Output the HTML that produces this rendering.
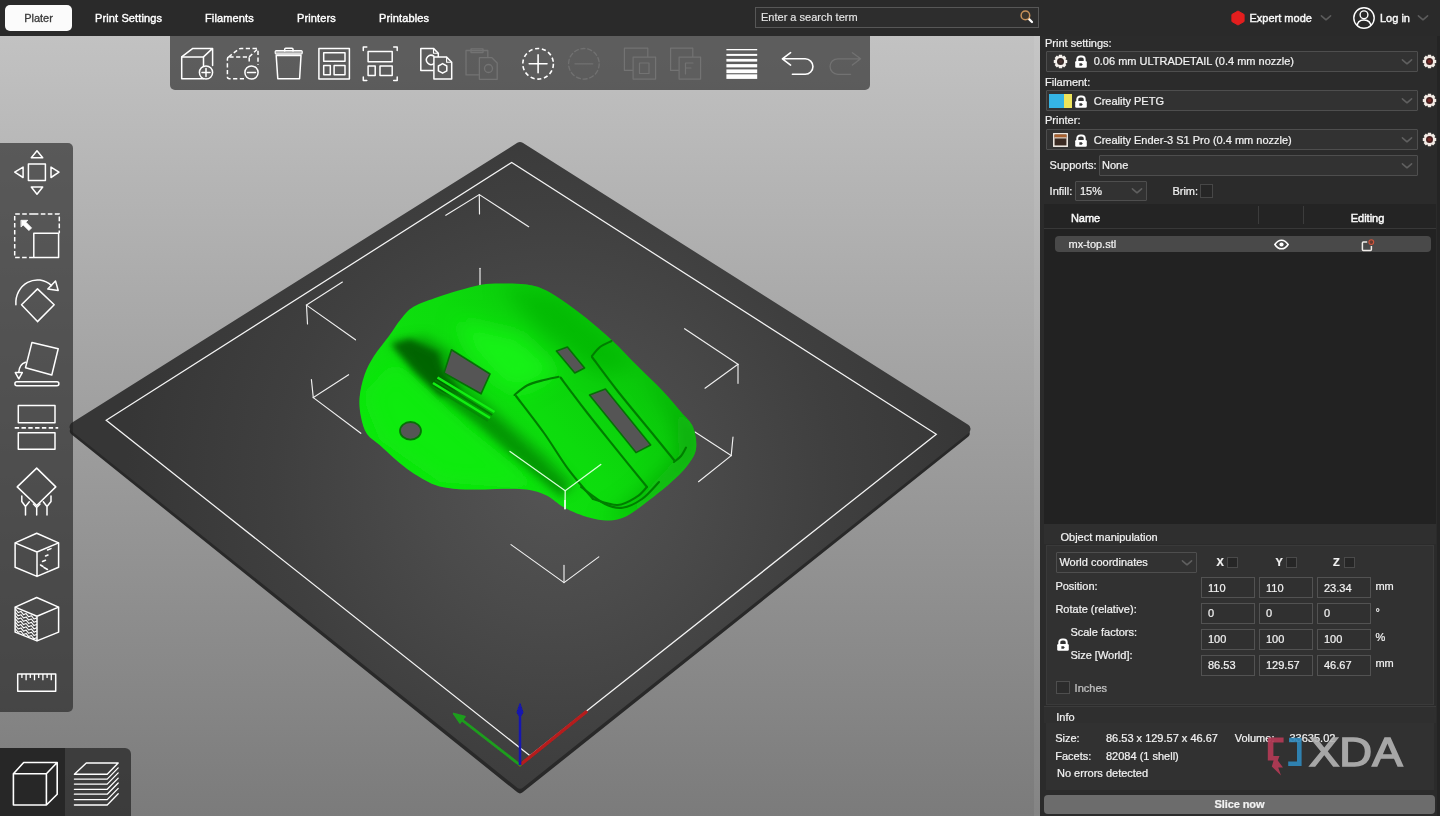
<!DOCTYPE html>
<html lang="en">
<head>
<meta charset="utf-8">
<title>PrusaSlicer</title>
<style>
*{box-sizing:border-box;margin:0;padding:0}
html,body{width:1440px;height:816px;overflow:hidden;background:#2b2b2b}
body{position:relative;font-family:"Liberation Sans",sans-serif;font-size:11px;color:#f0f0f0;-webkit-font-smoothing:antialiased;will-change:transform;transform:translateZ(0)}
.abs{position:absolute}
#topbar{position:absolute;left:0;top:0;width:1440px;height:36px;background:#2a2a2a}
.tab{position:absolute;top:5px;height:26px;line-height:26px;font-size:11px;color:#fff;text-align:center;white-space:nowrap;letter-spacing:0.12px;-webkit-text-stroke:0.4px #fff}
.tab.sel{background:#fbfbfb;color:#333;border-radius:5px;-webkit-text-stroke:0.3px #3a3a3a;color:#3a3a3a;letter-spacing:0}
#canvas{position:absolute;left:0;top:36px;width:1040px;height:780px;background:linear-gradient(#c2c2c2 0%,#7b7b7b 100%);overflow:hidden}
#scene{position:absolute;left:0;top:0;width:1040px;height:816px}
#tbar{position:absolute;left:170px;top:36px;width:700px;height:54px;background:rgba(30,30,30,.61);border-radius:0 0 5px 5px}
#lbar{position:absolute;left:0;top:143px;width:73px;height:569px;background:rgba(34,34,34,.63);border-radius:0 5px 5px 0}
#vbar{position:absolute;left:0;top:748px;width:131px;height:68px;background:rgba(30,30,30,.68);border-radius:0 6px 0 0}
#vbar .on{position:absolute;left:0;top:0;width:65px;height:68px;background:#272727}
#side{position:absolute;left:1040px;top:36px;width:400px;height:780px;background:#2b2b2b}
#sep{position:absolute;left:1033.5px;top:36px;width:6.5px;height:780px;background:rgba(255,255,255,.07)}
.lbl{position:absolute;white-space:nowrap;color:#f2f2f2;font-size:11px;line-height:13px;-webkit-text-stroke:0.22px #f2f2f2}
.combo{position:absolute;height:21px;background:#323232;border:1px solid #4e4e4e;border-radius:1px}
.combo .t{position:absolute;top:3px;font-size:11px;line-height:13px;white-space:nowrap;color:#f4f4f4}
.inp{position:absolute;width:54px;height:21px;background:#303030;border:1px solid #525252;font-size:11px;line-height:19px;padding-left:6px;color:#f4f4f4}
svg{position:absolute;overflow:visible}
</style>
</head>
<body>
<div id="canvas"></div>
<!--SCENE-->
<svg id="scene" width="1040" height="816" viewBox="0 0 1040 816" style="left:0;top:0;overflow:hidden">
<defs>
<radialGradient id="bedg" gradientUnits="userSpaceOnUse" cx="555" cy="480" r="430"><stop offset="0" stop-color="#545454"/><stop offset=".3" stop-color="#4b4b4b"/><stop offset=".65" stop-color="#3f3f3f"/><stop offset="1" stop-color="#363636"/></radialGradient>
<linearGradient id="mg" gradientUnits="userSpaceOnUse" x1="640" y1="300" x2="420" y2="500"><stop offset="0" stop-color="#0abe0a"/><stop offset=".5" stop-color="#0ddc0d"/><stop offset="1" stop-color="#0fe60f"/></linearGradient>
<filter id="b6" filterUnits="userSpaceOnUse" x="300" y="230" width="460" height="340"><feGaussianBlur stdDeviation="6"/></filter>
<filter id="b10" filterUnits="userSpaceOnUse" x="300" y="230" width="460" height="340"><feGaussianBlur stdDeviation="10"/></filter>
<filter id="b3" filterUnits="userSpaceOnUse" x="300" y="230" width="460" height="340"><feGaussianBlur stdDeviation="3"/></filter>
<filter id="b1" filterUnits="userSpaceOnUse" x="0" y="0" width="1040" height="816"><feGaussianBlur stdDeviation="0.6"/></filter>
<clipPath id="mclip"><path d="M481.0 284.7C488.1 283.5 492.8 283.6 500.0 283.5C507.2 283.4 517.5 283.4 524.5 284.2C531.5 285.0 535.6 285.9 541.7 288.4C547.8 290.9 553.6 294.5 561.0 299.4C568.4 304.3 577.2 310.9 585.8 317.8C594.4 324.7 604.2 333.0 612.7 341.0C621.2 349.0 628.8 357.4 637.0 365.6C645.2 373.8 654.5 382.3 661.8 390.0C669.1 397.7 675.8 405.8 681.0 412.0C686.2 418.2 690.5 420.8 693.0 427.0C695.5 433.2 697.0 442.5 696.0 449.0C695.0 455.5 691.3 460.3 687.0 466.0C682.7 471.7 676.9 477.1 670.0 483.3C663.1 489.5 652.8 497.5 645.4 503.0C638.0 508.5 631.9 513.5 625.8 516.4C619.7 519.3 614.7 520.4 608.6 520.6C602.5 520.8 596.4 519.7 589.0 517.6C581.6 515.5 571.5 511.5 564.5 507.8C557.5 504.1 553.0 498.7 546.7 495.6C540.5 492.6 534.4 490.6 527.0 489.5C519.6 488.4 510.7 488.7 502.5 488.7C494.3 488.7 486.2 489.5 478.0 489.5C469.8 489.5 460.9 489.5 453.5 488.7C446.1 487.9 440.8 487.3 433.9 484.6C427.0 481.9 418.4 476.6 411.9 472.3C405.4 468.0 400.0 463.3 394.7 458.8C389.4 454.3 384.6 449.4 380.0 445.3C375.4 441.2 370.2 438.7 367.0 434.0C363.8 429.3 362.2 423.1 361.0 417.0C359.8 410.9 359.0 404.5 359.6 397.5C360.2 390.5 362.1 381.9 364.5 375.0C366.9 368.1 369.9 362.5 374.0 356.0C378.1 349.5 384.5 342.2 389.0 336.0C393.5 329.8 396.9 323.9 401.0 319.0C405.1 314.1 407.3 310.5 413.5 306.8C419.7 303.1 430.6 299.7 438.0 297.0C445.4 294.3 450.4 292.9 457.6 290.8C464.8 288.8 473.9 285.9 481.0 284.7Z"/></clipPath>
</defs>
<path d="M74 431L520 150L965.5 433.5L520 789Z" fill="#292929" stroke="#292929" stroke-width="8.5" stroke-linejoin="round"/>
<path d="M74.5 427L520 147L965.5 429L520 783.5Z" fill="url(#bedg)" stroke="url(#bedg)" stroke-width="10" stroke-linejoin="round"/>
<path d="M106.2 420.3L511.7 162.5L936.3 434.2L530 755.8Z" fill="none" stroke="#f4f4f4" stroke-width="1.25" stroke-linejoin="miter"/>
<g fill="none" stroke="#f0f0f0" stroke-width="1.15" stroke-linecap="round" stroke-linejoin="miter">
<path d="M445.8 215.3L479.3 194.6L528.7 226.7"/>
<path d="M479.3 194.6L479.5 214.0"/>
<path d="M480.0 268.3L480.0 285.0"/>
<path d="M342.4 282.0L306.5 305.1L355.5 339.8"/>
<path d="M306.5 305.1L307.5 324.0"/>
<path d="M348.6 374.7L313.3 397.6L360.8 433.3"/>
<path d="M313.3 397.6L311.4 379.6"/>
<path d="M684.6 328.7L738.0 364.2L705.0 388.2"/>
<path d="M738.0 364.2L738.0 383.3"/>
<path d="M695.0 432.0L731.2 455.6L698.5 481.7"/>
<path d="M731.2 455.6L733.0 437.0"/>
<path d="M511.0 544.6L564.0 582.6L598.8 556.9"/>
<path d="M564.0 582.6L564.0 565.4"/>
</g>
<g><path d="M481.0 284.7C488.1 283.5 492.8 283.6 500.0 283.5C507.2 283.4 517.5 283.4 524.5 284.2C531.5 285.0 535.6 285.9 541.7 288.4C547.8 290.9 553.6 294.5 561.0 299.4C568.4 304.3 577.2 310.9 585.8 317.8C594.4 324.7 604.2 333.0 612.7 341.0C621.2 349.0 628.8 357.4 637.0 365.6C645.2 373.8 654.5 382.3 661.8 390.0C669.1 397.7 675.8 405.8 681.0 412.0C686.2 418.2 690.5 420.8 693.0 427.0C695.5 433.2 697.0 442.5 696.0 449.0C695.0 455.5 691.3 460.3 687.0 466.0C682.7 471.7 676.9 477.1 670.0 483.3C663.1 489.5 652.8 497.5 645.4 503.0C638.0 508.5 631.9 513.5 625.8 516.4C619.7 519.3 614.7 520.4 608.6 520.6C602.5 520.8 596.4 519.7 589.0 517.6C581.6 515.5 571.5 511.5 564.5 507.8C557.5 504.1 553.0 498.7 546.7 495.6C540.5 492.6 534.4 490.6 527.0 489.5C519.6 488.4 510.7 488.7 502.5 488.7C494.3 488.7 486.2 489.5 478.0 489.5C469.8 489.5 460.9 489.5 453.5 488.7C446.1 487.9 440.8 487.3 433.9 484.6C427.0 481.9 418.4 476.6 411.9 472.3C405.4 468.0 400.0 463.3 394.7 458.8C389.4 454.3 384.6 449.4 380.0 445.3C375.4 441.2 370.2 438.7 367.0 434.0C363.8 429.3 362.2 423.1 361.0 417.0C359.8 410.9 359.0 404.5 359.6 397.5C360.2 390.5 362.1 381.9 364.5 375.0C366.9 368.1 369.9 362.5 374.0 356.0C378.1 349.5 384.5 342.2 389.0 336.0C393.5 329.8 396.9 323.9 401.0 319.0C405.1 314.1 407.3 310.5 413.5 306.8C419.7 303.1 430.6 299.7 438.0 297.0C445.4 294.3 450.4 292.9 457.6 290.8C464.8 288.8 473.9 285.9 481.0 284.7Z" fill="url(#mg)"/>
<g clip-path="url(#mclip)">
<g filter="url(#b10)">
<path d="M500 285L560 295L640 365L600 375L540 330Z" fill="#09b409" opacity=".7"/>
<path d="M455 320L520 335L560 372L520 392L500 385L470 350Z" fill="#16f416" opacity=".9"/>
<path d="M362 395L395 360L470 430L545 490L440 482L380 440Z" fill="#12ec12" opacity=".9"/>
<path d="M640 362L700 430L698 462L640 512L600 524L640 495L680 455L675 420Z" fill="#08a408" opacity=".85"/>
</g>
<g filter="url(#b6)">
<path d="M392 342L425 336L452 352L455 378L500 415L545 455L575 486L560 494L512 455L477 424L440 394L415 371Z" fill="#057505" opacity=".55"/>
</g>
<g filter="url(#b3)">
<path d="M391 344L410 339L438 352L444 372L462 392L440 396L415 372Z" fill="#045a04" opacity=".85"/>
<path d="M440 396L462 392L500 425L540 462L565 486L563 499L512 454L477 423Z" fill="#068206" opacity=".42"/>
</g>
</g>
<ellipse cx="410.5" cy="430.8" rx="10.5" ry="8.8" fill="#555" stroke="#067006" stroke-width="1.8"/>
<path d="M451.5 349.7L490 374L481 393.8L444 373Z" fill="#555" stroke="#067006" stroke-width="1.6" stroke-linejoin="round"/>
<path d="M437.5 377.5L494.5 412M433 383L490 418" stroke="#12ee12" stroke-width="2.6" fill="none"/>
<path d="M435.2 380.3L492.2 415" stroke="#057a05" stroke-width="1.8" fill="none"/>
<path d="M431 386L488 421" stroke="#068a06" stroke-width="1.6" fill="none"/>
<path d="M556.4 351L567.4 347L584.6 368L574.8 373Z" fill="#555" stroke="#067006" stroke-width="1.6" stroke-linejoin="round"/>
<path d="M589.5 395L605.4 389L650.7 445L636 452.6Z" fill="#555" stroke="#067006" stroke-width="1.6" stroke-linejoin="round"/>
<g fill="none" stroke="#067e06" stroke-width="2.1" stroke-linecap="round" filter="url(#b1)">
<path d="M514.5 395.0C516.6 393.4 522.1 388.0 527.0 385.5C531.9 383.0 538.8 381.4 544.0 380.0C549.2 378.6 556.1 377.3 558.5 376.8"/>
<path d="M516.0 396.0C520.7 402.2 535.2 420.7 544.0 433.0C552.8 445.3 560.4 458.7 568.6 469.7C576.8 480.7 588.9 494.1 593.0 499.0"/>
<path d="M593.0 499.0C597.1 500.0 610.3 505.4 617.6 505.0C624.9 504.6 632.1 499.7 637.0 496.7C641.9 493.7 645.3 488.6 647.0 487.0"/>
<path d="M560.5 377.5C564.7 383.1 576.7 399.3 585.8 411.0C594.9 422.7 604.8 434.9 615.0 447.6C625.2 460.3 641.7 480.4 647.0 487.0"/>
<path d="M592.0 357.0C596.3 362.7 607.6 378.3 617.6 391.0C627.6 403.7 642.6 421.5 652.0 433.0C661.4 444.5 670.3 455.5 674.0 460.0"/>
<path d="M592.0 356.0C593.3 354.5 596.8 349.5 600.0 347.0C603.2 344.5 609.6 342.0 611.5 341.0"/>
<path d="M674.0 462.0C675.2 461.0 679.0 458.4 681.0 456.0C683.0 453.6 685.2 449.0 686.0 447.6"/>
<path d="M581.0 487.0C585.0 489.8 598.1 500.6 605.0 504.0C611.9 507.4 616.3 508.5 622.5 507.7C628.7 506.9 635.9 503.3 642.0 499.0C648.1 494.7 656.2 484.8 659.0 482.0"/>
</g>
</g>
<g fill="none" stroke="#d8ffd8" stroke-width="1.3" stroke-linecap="round">
<path d="M510.0 451.5L565.2 490.7L600.8 464.5"/>
<path d="M565.2 490.7L565.0 509.0"/>
</g>
<path d="M565 500L565 509" stroke="#fff" stroke-width="1.3"/>
<g filter="url(#b1)">
<path d="M520 765L586 712" stroke="#b61c1c" stroke-width="3.4" stroke-linecap="round"/>
<path d="M520 765L462 720" stroke="#1e9e1e" stroke-width="2.8" stroke-linecap="round"/>
<path d="M453.5 713.5L465 716.5L460 723Z" fill="#1e9e1e" stroke="#1e9e1e" stroke-width="1.5" stroke-linejoin="round"/>
<path d="M520 765L520 712" stroke="#1414b0" stroke-width="2.6" stroke-linecap="butt"/>
<path d="M520 703.5L523 712.5L520 717L517 712.5Z" fill="#1414b0" stroke="#1414b0" stroke-width="1" stroke-linejoin="round"/>
</g>
</svg>
<!--/SCENE-->
<div id="tbar"></div>
<div id="lbar"></div>
<div id="vbar"><div class="on"></div></div>
<!--ICONS-->
<svg width="1038" height="816" viewBox="0 0 1038 816" style="left:0;top:0" fill="none" stroke="#fff" stroke-width="1.5" stroke-linejoin="round" stroke-linecap="round">
<g>
<path d="M181.7 56.9H203.5V78.8H181.7Z"/>
<path d="M181.7 56.9L192.8 48.4H212.6L203.5 56.9M212.6 48.4V65.5"/>
<circle cx="206" cy="72.5" r="6.6" fill="#5e5e5e"/>
<path d="M202 72.5H210M206 68.5V76.5"/>
</g>
<g stroke-dasharray="4.2 2.5" stroke-linecap="butt">
<path d="M229.4 56.9H249.2V63M244 78.8H229.4Q227.4 78.8 227.4 76.8V58.9Q227.4 56.9 229.4 56.9"/>
<path d="M228.5 57L238.5 49.2Q239.6 48.4 241 48.4H256Q258 48.4 258 50.4V65"/>
<path d="M249.2 56.9L257 49.5"/>
</g>
<circle cx="251.5" cy="72.5" r="6.6" fill="#5e5e5e"/><path d="M247.5 72.5H255.5"/>
<rect x="275.2" y="50.6" width="27" height="3.5" rx="1" fill="rgba(255,255,255,.5)" stroke-width="1.2"/>
<path d="M284.7 51V49.2Q284.7 48.2 285.7 48.2H292Q293 48.2 293 49.2V51"/>
<path d="M276.2 55.6H301L299.6 78.8H277.8Z"/>
<path d="M318.9 48.4H349.4V79.1H318.9Z"/>
<path d="M323.7 52.7H345V61.3H323.7ZM323.7 65.4H330.3V74.7H323.7ZM334.1 65.4H345V74.7H334.1Z"/>
<path d="M363.3 50.4V46.9H366.8M393.7 46.9H397.2V50.4M397.2 76.9V80.4H393.7M366.8 80.4H363.3V76.9"/>
<path d="M368.1 51.6H392.2V61.8H368.1ZM368.1 66H375.2V75.4H368.1ZM380 66H392.2V75.4H380Z"/>
<path d="M433 70.4H420.8V48.4H433.5L438.3 53.2V57"/><path d="M433.5 48.6V53.2H438.1" stroke-width="1.1"/>
<path d="M433.8 56.2A4.6 4.6 0 1 0 433.8 63.6" />
<path d="M433.9 57.1H446.6L451.7 62.2V79.1H433.9Z" fill="#5e5e5e"/><path d="M446.6 57.3V62.2H451.5" stroke-width="1.1"/>
<path d="M442.6 63.6L446.8 66V70.8L442.6 73.2L438.4 70.8V66Z"/>
<g stroke="#737373" stroke-width="1.3">
<path d="M479 74.9H466V50.5H487.8V57"/><path d="M471 48.8H483V52.5H471Z"/>
<path d="M479.4 57.7H492L497.2 63V79.3H479.4Z"/><circle cx="488.5" cy="68.5" r="4"/>
</g>
<circle cx="538.1" cy="63.8" r="15.3" stroke-dasharray="4.2 2.66" stroke-linecap="butt" stroke-width="1.6"/>
<path d="M529.2 63.8H547M538.1 54.9V72.7" stroke-width="1.6"/>
<g stroke="#717171" stroke-width="1.3"><circle cx="583.9" cy="63.8" r="15.3" stroke-dasharray="4.2 2.66"/><path d="M575 63.8H592.8"/></g>
<g stroke="#737373" stroke-width="1.2">
<path d="M624.4 48.2H647.8V70.4H624.4Z"/><path d="M633.1 57.1H655.6V79.1H633.1Z" fill="#5e5e5e"/><path d="M639.5 63H649V73.5H639.5Z"/>
<path d="M670.6 48.2H692.8V70.4H670.6Z"/><path d="M679.1 57.1H700.6V79.1H679.1Z" fill="#5e5e5e"/><path d="M693 63H685.5V74M685.5 68H691"/>
</g>
<rect x="726.4" y="49.0" width="30.8" height="1.3" fill="#fff" stroke="none"/>
<rect x="726.4" y="53.9" width="30.8" height="2.0" fill="#fff" stroke="none"/>
<rect x="726.4" y="58.9" width="30.8" height="2.7" fill="#fff" stroke="none"/>
<rect x="726.4" y="64.1" width="30.8" height="3.3" fill="#fff" stroke="none"/>
<rect x="726.4" y="69.4" width="30.8" height="3.8" fill="#fff" stroke="none"/>
<rect x="726.4" y="74.3" width="30.8" height="4.6" fill="#fff" stroke="none"/>
<path d="M790.6 52.7L782.4 58.8L790.6 65.1M782.8 58.8H805.2A7.75 7.75 0 0 1 805.2 74.3H792.4" stroke-width="1.6"/>
<g stroke="#727272" stroke-width="1.3"><path d="M852.4 52.7L860.6 58.8L852.4 65.1M860.2 58.8H837.8A7.75 7.75 0 0 0 837.8 74.3H850.6"/></g>
<path d="M28.4 163.9H45.4V180.6H28.4Z"/>
<path d="M37 150.8L42.7 157.8H31.3ZM37 194.2L42.7 187H31.3ZM14.7 172.2L23.1 167.1V177.5ZM59 172.2L51 167.1V177.5Z"/>
<path d="M33.8 214.1H14.7V257.6H33.8M33.8 214.1H59.3V233.2" stroke-dasharray="4.6 2.4" stroke-linecap="butt"/>
<path d="M33.8 233.2H58.6V257.6H33.8Z"/>
<path d="M21.3 220.3H27.8L25.9 222.2L31.6 227.9L28.9 230.6L23.2 224.9L21.3 226.8Z" fill="#fff" stroke-width=".8"/>
<path d="M37.5 288.9L54.2 304.8L37.5 321.6L21.5 304.8Z"/>
<path d="M15.9 304.8A21.5 23 0 0 1 51.5 285.6"/>
<path d="M55.5 280.9L47.8 288.9L58.2 290.5Z"/>
<path d="M31.9 342.6L58.2 348.7L51.8 375L25.5 367.8Z"/>
<rect x="14.9" y="381.7" width="44" height="4.1" rx="2"/>
<path d="M25.5 362.2Q19.2 364.5 18.8 372"/><path d="M15.3 372.6H22.3L18.8 378.8Z"/>
<path d="M18.3 405.5H55V422.7H18.3ZM18.3 432.7H55V449.3H18.3Z"/>
<path d="M14.7 427.8H58.2" stroke-dasharray="4.4 2.4" stroke-linecap="butt" stroke-width="1.7"/>
<path d="M36.7 468.1L55.8 486.9L36.7 505.5L17.2 486.9Z"/>
<path d="M21.8 496V501.5L25.5 506.5V515M25.5 506.5L29.3 501.8M51 496V501.5L47 506.5V515M47 506.5L43.3 501.8M36.7 515V507.5L33.4 504M36.7 507.5L40 504"/>
<path d="M36.7 533.3L58.6 542.9V567.3L37 576.4L15.1 567.3V542.9ZM15.1 542.9L37 552L58.6 542.9M37 552V576.4"/>
<path d="M47.5 550L51 548.6M45.5 556L48 555M42.5 561.5L45.5 560.2M40.5 565L43 566.5M44 567.5L47.5 569.5" stroke-width="1.5"/>
<path d="M36.7 597.5L58.6 607.1V632.1L37 640.9L15.1 632.1V607.1ZM15.1 607.1L37 616.2L58.6 607.1M37 616.2V640.9"/>
<path d="M15.6 609.2L18.2 612.5L20.9 611.4L23.5 614.7L26.1 613.6L28.7 616.8L31.4 615.7L34.0 619.0L36.6 617.9M15.6 612.5L18.2 615.8L20.9 614.7L23.5 618.0L26.1 616.9L28.7 620.1L31.4 619.0L34.0 622.3L36.6 621.2M15.6 615.8L18.2 619.1L20.9 618.0L23.5 621.3L26.1 620.2L28.7 623.4L31.4 622.3L34.0 625.6L36.6 624.5M15.6 619.1L18.2 622.4L20.9 621.3L23.5 624.6L26.1 623.5L28.7 626.7L31.4 625.6L34.0 628.9L36.6 627.8M15.6 622.4L18.2 625.7L20.9 624.6L23.5 627.9L26.1 626.8L28.7 630.0L31.4 628.9L34.0 632.2L36.6 631.1M15.6 625.7L18.2 629.0L20.9 627.9L23.5 631.2L26.1 630.1L28.7 633.3L31.4 632.2L34.0 635.5L36.6 634.4M15.6 629.0L18.2 632.3L20.9 631.2L23.5 634.5L26.1 633.4L28.7 636.6L31.4 635.5L34.0 638.8L36.6 637.7" stroke-width="1.1"/>
<path d="M17.7 674.1H55.7V691.3H17.7Z"/>
<path d="M21.9 674.1V678.1M26.1 674.1V680.3M30.3 674.1V678.1M34.5 674.1V680.3M38.7 674.1V678.1M42.9 674.1V680.3M47.1 674.1V678.1M51.3 674.1V680.3" stroke-width="1.3" stroke-linecap="butt"/>
<path d="M13.4 773.7H46.4V805H13.4ZM13.4 773.7L23.7 762.5H57.2L46.4 773.7M57.2 762.5V794.2L46.4 805" stroke-width="1.6"/>
<path d="M74.4 774.2L86.3 763H118.2L107.2 774.2Z" stroke-width="1.4"/>
<path d="M74.4 779.1H107.2L118.2 767.9M74.4 784.1H107.2L118.2 772.9M74.4 789.3H107.2L118.2 778.1M74.4 794.2H107.2L118.2 783.0M74.4 799.6H107.2L118.2 788.4M74.4 805.0H107.2L118.2 793.8" stroke-width="1.3"/>
</svg>
<!--/ICONS-->
<div id="topbar">
<div class="tab sel" style="left:5px;width:67px">Plater</div>
<div class="tab" style="left:95px">Print Settings</div>
<div class="tab" style="left:205px">Filaments</div>
<div class="tab" style="left:297px">Printers</div>
<div class="tab" style="left:379px">Printables</div>
</div>
<div id="sep"></div>
<div id="side"></div>
<!--SIDE-->
<div class="abs" style="left:755px;top:7px;width:283.5px;height:20.5px;border:1px solid #575757;background:#2d2d2d"></div>
<div class="lbl" style="left:761.0px;top:11.2px;color:#e6e6e6;-webkit-text-stroke:0.15px #e6e6e6">Enter a search term</div>
<svg width="14" height="14" viewBox="0 0 14 14" style="left:1019px;top:9px"><path d="M9.6 9.6L13 13" stroke="#fff" stroke-width="2.2" stroke-linecap="round"/><circle cx="6.4" cy="6.4" r="4.3" fill="#3a342c" stroke="#c8925a" stroke-width="1.5"/></svg>
<svg width="16" height="16" viewBox="-8 -8 16 16" style="left:1229.5px;top:10px"><path d="M0 -7L6.1 -3.5L6.1 3.5L0 7L-6.1 3.5L-6.1 -3.5Z" fill="#e31e1e" stroke="#e31e1e" stroke-width="1" stroke-linejoin="round"/></svg>
<div class="lbl" style="left:1249.5px;top:12.3px;-webkit-text-stroke:0.4px #fff">Expert mode</div>
<svg width="12" height="8" viewBox="0 0 12 8" style="left:1320.2px;top:14.0px"><path d="M1.4 1.8L6 5.8L10.6 1.8" fill="none" stroke="#5c5c5c" stroke-width="1.55" stroke-linecap="round" stroke-linejoin="round"/></svg>
<svg width="24" height="24" viewBox="-12 -12 24 24" style="left:1351.8px;top:6px"><defs><clipPath id="uc"><circle r="10"/></clipPath></defs><circle r="10.2" fill="none" stroke="#fff" stroke-width="1.4"/><circle cy="-3.2" r="3.9" fill="none" stroke="#fff" stroke-width="1.4"/><path d="M-7 9.5C-7 3.5 -3.5 2 0 2S7 3.5 7 9.5" fill="none" stroke="#fff" stroke-width="1.4" clip-path="url(#uc)"/></svg>
<div class="lbl" style="left:1380.0px;top:12.3px;-webkit-text-stroke:0.4px #fff">Log in</div>
<svg width="12" height="8" viewBox="0 0 12 8" style="left:1417.3px;top:14.0px"><path d="M1.4 1.8L6 5.8L10.6 1.8" fill="none" stroke="#5c5c5c" stroke-width="1.55" stroke-linecap="round" stroke-linejoin="round"/></svg>
<div class="abs" style="left:1044px;top:204px;width:392px;height:320px;background:#222"></div>
<div class="abs" style="left:1044px;top:204px;width:392px;height:25px;background:#242424;border-bottom:1px solid #383838"></div>
<div class="abs" style="left:1258px;top:206px;width:1px;height:18px;background:#3c3c3c"></div>
<div class="abs" style="left:1303px;top:206px;width:1px;height:18px;background:#3c3c3c"></div>
<div class="lbl" style="left:1045.0px;top:36.5px;">Print settings:</div>
<div class="combo" style="left:1046.0px;top:51.0px;width:371.5px;height:20.5px"></div>
<svg width="15" height="15" viewBox="-7.5 -7.5 15 15" style="left:1052.8px;top:54.2px"><path d="M6.71 -1.61L6.71 1.61L5.30 1.81L5.03 2.46L5.88 3.61L3.61 5.88L2.46 5.03L1.81 5.30L1.61 6.71L-1.61 6.71L-1.81 5.30L-2.46 5.03L-3.61 5.88L-5.88 3.61L-5.03 2.46L-5.30 1.81L-6.71 1.61L-6.71 -1.61L-5.30 -1.81L-5.03 -2.46L-5.88 -3.61L-3.61 -5.88L-2.46 -5.03L-1.81 -5.30L-1.61 -6.71L1.61 -6.71L1.81 -5.30L2.46 -5.03L3.61 -5.88L5.88 -3.61L5.03 -2.46L5.30 -1.81Z" fill="#f6f2ee"/><circle r="3.5" fill="#382c2a"/><circle r="1.8" fill="#4a3634"/></svg>
<svg width="12" height="13" viewBox="0 0 12 13" style="left:1075.0px;top:55.3px"><path d="M2.3 6.5V4.3a2.9 2.9 0 0 1 2.9-2.9h1.6a2.9 2.9 0 0 1 2.9 2.9V6.5" fill="none" stroke="#fff" stroke-width="2"/><rect x="0.2" y="5.9" width="11.6" height="6.9" rx="1.3" fill="#fff"/><path d="M4.4 8.3h2.2l1.2 1.2l-1.2 1.2H4.4Z" fill="#333"/></svg>
<div class="lbl" style="left:1093.7px;top:55.4px;">0.06 mm ULTRADETAIL (0.4 mm nozzle)</div>
<svg width="12" height="8" viewBox="0 0 12 8" style="left:1401.4px;top:58.0px"><path d="M1.4 1.8L6 5.8L10.6 1.8" fill="none" stroke="#606060" stroke-width="1.55" stroke-linecap="round" stroke-linejoin="round"/></svg>
<svg width="15" height="15" viewBox="-7.5 -7.5 15 15" style="left:1422.1px;top:54.2px"><path d="M6.71 -1.61L6.71 1.61L5.30 1.81L5.03 2.46L5.88 3.61L3.61 5.88L2.46 5.03L1.81 5.30L1.61 6.71L-1.61 6.71L-1.81 5.30L-2.46 5.03L-3.61 5.88L-5.88 3.61L-5.03 2.46L-5.30 1.81L-6.71 1.61L-6.71 -1.61L-5.30 -1.81L-5.03 -2.46L-5.88 -3.61L-3.61 -5.88L-2.46 -5.03L-1.81 -5.30L-1.61 -6.71L1.61 -6.71L1.81 -5.30L2.46 -5.03L3.61 -5.88L5.88 -3.61L5.03 -2.46L5.30 -1.81Z" fill="#f3ece6"/><circle r="3.5" fill="#4a2322"/><circle r="1.8" fill="#7a2b28"/></svg>
<div class="lbl" style="left:1045.0px;top:75.6px;">Filament:</div>
<div class="combo" style="left:1046.0px;top:90.2px;width:371.5px;height:20.5px"></div>
<div class="abs" style="left:1048.5px;top:93.5px;width:23px;height:14.5px;background:#35b4e4"></div><div class="abs" style="left:1063.5px;top:93.5px;width:8px;height:14.5px;background:#eee45a"></div>
<svg width="12" height="13" viewBox="0 0 12 13" style="left:1075.0px;top:94.5px"><path d="M2.3 6.5V4.3a2.9 2.9 0 0 1 2.9-2.9h1.6a2.9 2.9 0 0 1 2.9 2.9V6.5" fill="none" stroke="#fff" stroke-width="2"/><rect x="0.2" y="5.9" width="11.6" height="6.9" rx="1.3" fill="#fff"/><path d="M4.4 8.3h2.2l1.2 1.2l-1.2 1.2H4.4Z" fill="#333"/></svg>
<div class="lbl" style="left:1093.7px;top:94.7px;">Creality PETG</div>
<svg width="12" height="8" viewBox="0 0 12 8" style="left:1401.4px;top:97.2px"><path d="M1.4 1.8L6 5.8L10.6 1.8" fill="none" stroke="#606060" stroke-width="1.55" stroke-linecap="round" stroke-linejoin="round"/></svg>
<svg width="15" height="15" viewBox="-7.5 -7.5 15 15" style="left:1422.1px;top:93.3px"><path d="M6.71 -1.61L6.71 1.61L5.30 1.81L5.03 2.46L5.88 3.61L3.61 5.88L2.46 5.03L1.81 5.30L1.61 6.71L-1.61 6.71L-1.81 5.30L-2.46 5.03L-3.61 5.88L-5.88 3.61L-5.03 2.46L-5.30 1.81L-6.71 1.61L-6.71 -1.61L-5.30 -1.81L-5.03 -2.46L-5.88 -3.61L-3.61 -5.88L-2.46 -5.03L-1.81 -5.30L-1.61 -6.71L1.61 -6.71L1.81 -5.30L2.46 -5.03L3.61 -5.88L5.88 -3.61L5.03 -2.46L5.30 -1.81Z" fill="#f3ece6"/><circle r="3.5" fill="#4a2322"/><circle r="1.8" fill="#7a2b28"/></svg>
<div class="lbl" style="left:1045.0px;top:114.4px;">Printer:</div>
<div class="combo" style="left:1046.0px;top:129.3px;width:371.5px;height:20.5px"></div>
<svg width="15" height="14" viewBox="0 0 15 14" style="left:1053px;top:132.7px"><rect x=".8" y=".8" width="13.4" height="12.4" fill="#3a2a22" stroke="#f4efe8" stroke-width="1.5"/><rect x="1.5" y="1.5" width="12" height="3.2" fill="#a8602e"/><rect x="1.5" y="4.4" width="12" height="1" fill="#f4efe8"/></svg>
<svg width="12" height="13" viewBox="0 0 12 13" style="left:1075.0px;top:133.5px"><path d="M2.3 6.5V4.3a2.9 2.9 0 0 1 2.9-2.9h1.6a2.9 2.9 0 0 1 2.9 2.9V6.5" fill="none" stroke="#fff" stroke-width="2"/><rect x="0.2" y="5.9" width="11.6" height="6.9" rx="1.3" fill="#fff"/><path d="M4.4 8.3h2.2l1.2 1.2l-1.2 1.2H4.4Z" fill="#333"/></svg>
<div class="lbl" style="left:1093.7px;top:134.1px;">Creality Ender-3 S1 Pro (0.4 mm nozzle)</div>
<svg width="12" height="8" viewBox="0 0 12 8" style="left:1401.4px;top:136.2px"><path d="M1.4 1.8L6 5.8L10.6 1.8" fill="none" stroke="#606060" stroke-width="1.55" stroke-linecap="round" stroke-linejoin="round"/></svg>
<svg width="15" height="15" viewBox="-7.5 -7.5 15 15" style="left:1422.1px;top:132.3px"><path d="M6.71 -1.61L6.71 1.61L5.30 1.81L5.03 2.46L5.88 3.61L3.61 5.88L2.46 5.03L1.81 5.30L1.61 6.71L-1.61 6.71L-1.81 5.30L-2.46 5.03L-3.61 5.88L-5.88 3.61L-5.03 2.46L-5.30 1.81L-6.71 1.61L-6.71 -1.61L-5.30 -1.81L-5.03 -2.46L-5.88 -3.61L-3.61 -5.88L-2.46 -5.03L-1.81 -5.30L-1.61 -6.71L1.61 -6.71L1.81 -5.30L2.46 -5.03L3.61 -5.88L5.88 -3.61L5.03 -2.46L5.30 -1.81Z" fill="#f3ece6"/><circle r="3.5" fill="#4a2322"/><circle r="1.8" fill="#7a2b28"/></svg>
<div class="lbl" style="left:1049.6px;top:159.3px;">Supports:</div>
<div class="combo" style="left:1098.5px;top:155.0px;width:319.0px;height:20.5px"></div>
<div class="lbl" style="left:1102.0px;top:159.3px;">None</div>
<svg width="12" height="8" viewBox="0 0 12 8" style="left:1401.4px;top:161.5px"><path d="M1.4 1.8L6 5.8L10.6 1.8" fill="none" stroke="#606060" stroke-width="1.55" stroke-linecap="round" stroke-linejoin="round"/></svg>
<div class="lbl" style="left:1049.6px;top:184.7px;">Infill:</div>
<div class="combo" style="left:1074.6px;top:180.8px;width:72.0px;height:20.5px"></div>
<div class="lbl" style="left:1080.0px;top:184.5px;">15%</div>
<svg width="12" height="8" viewBox="0 0 12 8" style="left:1131.4px;top:187.3px"><path d="M1.4 1.8L6 5.8L10.6 1.8" fill="none" stroke="#606060" stroke-width="1.55" stroke-linecap="round" stroke-linejoin="round"/></svg>
<div class="lbl" style="left:1172.4px;top:184.7px;">Brim:</div>
<div class="abs" style="left:1199.6px;top:184.4px;width:13.5px;height:13.5px;background:#262626;border:1px solid #474747"></div>
<div class="lbl" style="left:1070.9px;top:211.9px;-webkit-text-stroke:0.45px #fff">Name</div>
<div class="lbl" style="left:1350.7px;top:211.9px;-webkit-text-stroke:0.45px #fff">Editing</div>
<div class="abs" style="left:1054.5px;top:236px;width:376.5px;height:16.3px;background:#494949;border-radius:4px"></div>
<div class="lbl" style="left:1068.5px;top:238.0px;">mx-top.stl</div>
<svg width="15" height="11" viewBox="-7.5 -5.5 15 11" style="left:1273.5px;top:239.2px"><path d="M-6.6 0C-4.6 -3.2 -2.4 -4.3 0 -4.3S4.6 -3.2 6.6 0C4.6 3.2 2.4 4.3 0 4.3S-4.6 3.2 -6.6 0Z" fill="none" stroke="#fff" stroke-width="1.6"/><circle r="2.1" fill="#fff"/></svg>
<svg width="14" height="13" viewBox="0 0 14 13" style="left:1361px;top:239px"><path d="M6.2 3H2.4a1 1 0 0 0-1 1v6.6a1 1 0 0 0 1 1h7a1 1 0 0 0 1-1V7" fill="none" stroke="#f0ece8" stroke-width="1.5"/><circle cx="10.3" cy="3.1" r="2.4" fill="#6a3a30" stroke="#d0553c" stroke-width="1.1"/></svg>
<div class="abs" style="left:1044px;top:524px;width:392px;height:20px;background:#2f2f2f"></div>
<div class="abs" style="left:1046px;top:544.5px;width:388px;height:160px;background:#313131;border:1px solid #3a3a3a"></div>
<div class="lbl" style="left:1060.5px;top:531.1px;">Object manipulation</div>
<div class="combo" style="left:1055.9px;top:552.0px;width:141.0px;height:20.5px"></div>
<div class="lbl" style="left:1059.4px;top:556.4px;">World coordinates</div>
<svg width="12" height="8" viewBox="0 0 12 8" style="left:1180.6px;top:558.5px"><path d="M1.4 1.8L6 5.8L10.6 1.8" fill="none" stroke="#606060" stroke-width="1.55" stroke-linecap="round" stroke-linejoin="round"/></svg>
<div class="lbl" style="left:1216.5px;top:556.4px;font-weight:bold">X</div>
<div class="abs" style="left:1227.0px;top:557.3px;width:11px;height:10.5px;background:#262626;border:1px solid #4a4a4a"></div>
<div class="lbl" style="left:1275.5px;top:556.4px;font-weight:bold">Y</div>
<div class="abs" style="left:1286.0px;top:557.3px;width:11px;height:10.5px;background:#262626;border:1px solid #4a4a4a"></div>
<div class="lbl" style="left:1333.0px;top:556.4px;font-weight:bold">Z</div>
<div class="abs" style="left:1343.5px;top:557.3px;width:11px;height:10.5px;background:#262626;border:1px solid #4a4a4a"></div>
<div class="inp" style="left:1201.4px;top:577.3px"></div>
<div class="lbl" style="left:1208.0px;top:581.7px;">110</div>
<div class="inp" style="left:1259.4px;top:577.3px"></div>
<div class="lbl" style="left:1266.0px;top:581.7px;">110</div>
<div class="inp" style="left:1317.4px;top:577.3px"></div>
<div class="lbl" style="left:1324.0px;top:581.7px;">23.34</div>
<div class="lbl" style="left:1375.4px;top:580.2px;">mm</div>
<div class="inp" style="left:1201.4px;top:603.4px"></div>
<div class="lbl" style="left:1208.0px;top:607.3px;">0</div>
<div class="inp" style="left:1259.4px;top:603.4px"></div>
<div class="lbl" style="left:1266.0px;top:607.3px;">0</div>
<div class="inp" style="left:1317.4px;top:603.4px"></div>
<div class="lbl" style="left:1324.0px;top:607.3px;">0</div>
<div class="lbl" style="left:1375.4px;top:605.8px;">°</div>
<div class="inp" style="left:1201.4px;top:629.0px"></div>
<div class="lbl" style="left:1208.0px;top:632.7px;">100</div>
<div class="inp" style="left:1259.4px;top:629.0px"></div>
<div class="lbl" style="left:1266.0px;top:632.7px;">100</div>
<div class="inp" style="left:1317.4px;top:629.0px"></div>
<div class="lbl" style="left:1324.0px;top:632.7px;">100</div>
<div class="lbl" style="left:1375.4px;top:631.2px;">%</div>
<div class="inp" style="left:1201.4px;top:655.0px"></div>
<div class="lbl" style="left:1208.0px;top:658.5px;">86.53</div>
<div class="inp" style="left:1259.4px;top:655.0px"></div>
<div class="lbl" style="left:1266.0px;top:658.5px;">129.57</div>
<div class="inp" style="left:1317.4px;top:655.0px"></div>
<div class="lbl" style="left:1324.0px;top:658.5px;">46.67</div>
<div class="lbl" style="left:1375.4px;top:657.0px;">mm</div>
<div class="lbl" style="left:1055.4px;top:580.1px;">Position:</div>
<div class="lbl" style="left:1055.4px;top:602.7px;">Rotate (relative):</div>
<div class="lbl" style="left:1070.4px;top:625.9px;">Scale factors:</div>
<div class="lbl" style="left:1070.4px;top:649.0px;">Size [World]:</div>
<svg width="12" height="13" viewBox="0 0 12 13" style="left:1057.2px;top:637.7px"><path d="M2.3 6.5V4.3a2.9 2.9 0 0 1 2.9-2.9h1.6a2.9 2.9 0 0 1 2.9 2.9V6.5" fill="none" stroke="#fff" stroke-width="2"/><rect x="0.2" y="5.9" width="11.6" height="6.9" rx="1.3" fill="#fff"/><path d="M4.4 8.3h2.2l1.2 1.2l-1.2 1.2H4.4Z" fill="#333"/></svg>
<div class="abs" style="left:1055.9px;top:681px;width:13.8px;height:13.4px;background:#2c2c2c;border:1px solid #4e4e4e"></div>
<div class="lbl" style="left:1074.6px;top:681.7px;color:#a4a4a4">Inches</div>
<div class="abs" style="left:1044px;top:705.5px;width:392px;height:1px;background:#3c3c3c"></div>
<div class="abs" style="left:1044px;top:706.5px;width:392px;height:16.5px;background:#2f2f2f"></div>
<div class="abs" style="left:1046px;top:723px;width:388px;height:67px;background:#313131"></div>
<div class="lbl" style="left:1056.3px;top:710.6px;">Info</div>
<div class="lbl" style="left:1055.2px;top:732.1px;">Size:</div>
<div class="lbl" style="left:1106.0px;top:732.1px;">86.53 x 129.57 x 46.67</div>
<div class="lbl" style="left:1234.7px;top:732.1px;">Volume:</div>
<div class="lbl" style="left:1289.5px;top:732.1px;">33635.02</div>
<div class="lbl" style="left:1055.2px;top:750.1px;">Facets:</div>
<div class="lbl" style="left:1106.0px;top:750.1px;">82084 (1 shell)</div>
<div class="lbl" style="left:1057.0px;top:766.7px;">No errors detected</div>
<svg width="140" height="44" viewBox="1265 734 140 44" style="left:1265px;top:734px"><path d="M1283.6 737.6H1267.8V760.5H1273.6L1271.8 766.5L1281 775.5L1278.2 767.5H1283L1277.8 760.5L1279.5 756H1273.4V742.4H1283.6Z" fill="#b23a55" opacity=".92"/><path d="M1289 737.8H1301.6V766H1288.2V761.4H1297V742.2H1289Z" fill="#2f88bb" opacity=".92"/><text x="1309" y="766.2" font-family="'Liberation Sans',sans-serif" font-size="40" font-weight="normal" fill="#b4b4b4" stroke="#b4b4b4" stroke-width="1.5" stroke-linejoin="miter" opacity=".9" textLength="93.5" lengthAdjust="spacingAndGlyphs">XDA</text></svg>
<div class="abs" style="left:1044.4px;top:794.6px;width:391px;height:19px;background:#6c6c6c;border-radius:4px"></div>
<div class="lbl" style="left:1239.5px;top:798.4px;font-weight:bold;transform:translateX(-50%);letter-spacing:-0.1px">Slice now</div>
<div class="abs" style="left:1436.5px;top:36px;width:3.5px;height:780px;background:#242424"></div>
<!--/SIDE-->
</body>
</html>
